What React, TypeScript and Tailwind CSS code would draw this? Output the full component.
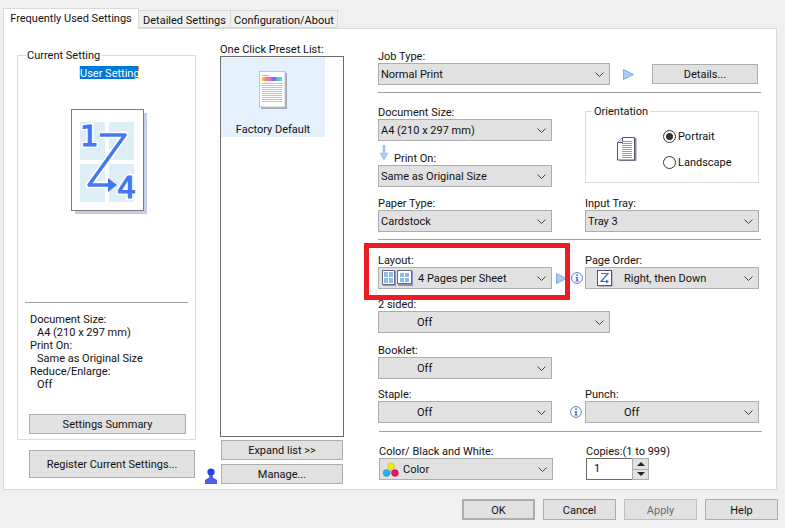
import type { ReactNode } from "react";

const Chevron = () => (
  <svg width="9" height="5" viewBox="0 0 9 5" fill="none" stroke="#404040" strokeWidth="1" className="shrink-0">
    <path d="M0.5 0.5L4.5 4.5L8.5 0.5" />
  </svg>
);

function Select({ className = "", indent = "pl-[2px]", icon, children }: { className?: string; indent?: string; icon?: ReactNode; children: ReactNode }) {
  return (
    <div className={`flex h-[22px] items-center border border-[#adadad] bg-[#e1e1e1] pr-[5px] ${indent} ${className}`}>
      {icon}
      <span className="flex-1 whitespace-nowrap pt-[2px]">{children}</span>
      <Chevron />
    </div>
  );
}

function Btn({ className = "", children }: { className?: string; children: ReactNode }) {
  return (
    <div className={`flex items-center justify-center border border-[#adadad] bg-[#e1e1e1] pt-[2px] whitespace-nowrap ${className}`}>
      {children}
    </div>
  );
}

const Label = ({ className = "", children }: { className?: string; children: ReactNode }) => (
  <div className={`h-[14px] leading-[16px] whitespace-nowrap ${className}`}>{children}</div>
);

const Divider = ({ className = "" }: { className?: string }) => <div className={`h-px bg-[#a0a0a0] ${className}`} />;

const BlueArrow = () => (
  <svg width="11" height="11" viewBox="0 0 11 11" className="shrink-0">
    <path d="M0.5 0.5L10.5 5.5L0.5 10.5Z" fill="#a9ccf0" stroke="#7fb0e4" />
  </svg>
);

const Info = () => (
  <svg width="12" height="12" viewBox="0 0 12 12" className="shrink-0">
    <circle cx="6" cy="6" r="5.4" fill="#fff" stroke="#5b7fd6" />
    <rect x="5.2" y="2.4" width="1.6" height="1.5" fill="#3f66c8" />
    <path d="M4.6 5H6.8V8.8H7.8V9.6H4.4V8.8H5.3V5.8H4.6Z" fill="#3f66c8" />
  </svg>
);

const digit = "DejaVu Sans, sans-serif";

const PreviewPage = () => (
  <svg width="76" height="105" viewBox="0 0 76 105" className="ml-[53px] mt-[30px] block">
    <rect x="4" y="4" width="72" height="101" fill="#c3cde8" />
    <rect x="0.5" y="0.5" width="72" height="101" fill="#fff" stroke="#7d7d7d" />
    <rect x="9" y="13" width="25" height="38" fill="#deeef7" />
    <rect x="38" y="13" width="25" height="38" fill="#deeef7" />
    <rect x="9" y="55" width="25" height="38" fill="#deeef7" />
    <rect x="38" y="55" width="25" height="38" fill="#deeef7" />
    <g fill="none" strokeLinejoin="round">
      <path d="M29 26H54L18 76H44" stroke="#fff" strokeWidth="7" />
      <path d="M29 26H54L18 76H44" stroke="#4477f5" strokeWidth="3.5" />
    </g>
    <path d="M37 69L46 76L37 83Z" fill="#4477f5" />
    <text x="9" y="37" fontSize="29" fill="#fff" stroke="#fff" strokeWidth="4" fontFamily={digit}>1</text>
    <text x="9" y="37" fontSize="29" fill="#4477f5" stroke="#4477f5" strokeWidth="1.2" fontFamily={digit}>1</text>
    <text x="46" y="89" fontSize="30" fill="#fff" stroke="#fff" strokeWidth="4" fontFamily={digit}>4</text>
    <text x="46" y="89" fontSize="30" fill="#4477f5" stroke="#4477f5" strokeWidth="1.2" fontFamily={digit}>4</text>
  </svg>
);

const PresetDoc = () => (
  <svg width="28" height="38" viewBox="0 0 28 38" className="block">
    <defs>
      <linearGradient id="rainbow">
        <stop offset="0" stopColor="#ffd84a" />
        <stop offset="0.2" stopColor="#ff7a6a" />
        <stop offset="0.4" stopColor="#f060e0" />
        <stop offset="0.6" stopColor="#5a6cf0" />
        <stop offset="0.8" stopColor="#40d0e8" />
        <stop offset="1" stopColor="#60f080" />
      </linearGradient>
    </defs>
    <rect x="2" y="2" width="26" height="36" fill="#a9a9bc" />
    <rect x="0.5" y="0.5" width="25.5" height="35.5" fill="#fff" stroke="#c4c4c4" />
    <rect x="3" y="4" width="7" height="1" fill="#b6b6c6" />
    <rect x="3" y="6" width="20" height="4" fill="url(#rainbow)" />
    {[12, 14, 16, 18, 20, 22, 24, 26, 28, 30].map((y) => (
      <rect key={y} x="3" y={y} width="20" height="1" fill="#a9c8f2" />
    ))}
  </svg>
);

const Person = () => (
  <svg width="12" height="16" viewBox="0 0 12 16" className="mr-[4px] shrink-0">
    <circle cx="6" cy="4" r="3.6" fill="#2a3fe0" />
    <path d="M4.2 7H7.8V9.5L12 12V16H0V12L4.2 9.5Z" fill="#4a5ff0" />
  </svg>
);

const MiniGrid = ({ wide }: { wide?: boolean }) => (
  <svg width={wide ? 16 : 14} height="16" viewBox={wide ? "0 0 16 16" : "0 0 14 16"} className="shrink-0">
    <rect x="1" y="1" width={wide ? 15 : 13} height="15" fill="#8f93c0" />
    <rect x="0.5" y="0.5" width={wide ? 14 : 12} height={wide ? 13 : 14} fill="#fff" stroke="#6a6a80" />
    {(wide ? [3, 8] : [2, 7]).map((x) =>
      (wide ? [3, 8] : [2, 8]).map((y) => (
        <rect key={`${x}-${y}`} x={x} y={y} width="4" height={wide ? 4 : 5} fill="#8cbde8" />
      )),
    )}
  </svg>
);

const OrderIcon = () => (
  <svg width="16" height="17" viewBox="0 0 16 17" className="shrink-0">
    <rect x="1.5" y="1.5" width="14" height="15" fill="#8f93c0" />
    <rect x="0.5" y="0.5" width="14" height="15" fill="#fff" stroke="#55557a" />
    <path d="M4 3.5H11L4 11.5H10" fill="none" stroke="#3f66e0" strokeWidth="1.2" />
    <path d="M9 9.5L12 11.5L9 13.5Z" fill="#3f66e0" />
  </svg>
);

const PortraitDoc = () => (
  <svg width="20" height="25" viewBox="0 0 20 25" className="block">
    <path d="M6 1H18.5V24H2V5Z" fill="#8a8ab0" transform="translate(1 0)" />
    <path d="M5.5 0.5H17.5V23H0.5V5.5Z" fill="#fff" stroke="#555570" />
    <path d="M5.5 0.5V5.5H0.5" fill="#e8e8f0" stroke="#555570" />
    {[4, 6, 8, 10, 12, 14, 16, 18, 20].map((y) => (
      <rect key={y} x="5" y={y} width="10" height="1" fill="#7b9ae0" />
    ))}
  </svg>
);

const ColorDots = () => (
  <svg width="17" height="16" viewBox="0 0 17 16" className="mr-[4px] shrink-0">
    <path d="M4 9H13L14 13H3Z" fill="#b9b9b9" />
    <circle cx="9" cy="5" r="3.4" fill="#f5e614" stroke="#c9b800" strokeWidth="0.5" />
    <circle cx="4.5" cy="12" r="3.4" fill="#25b4ea" stroke="#1a8cc0" strokeWidth="0.5" />
    <circle cx="13" cy="12" r="3.4" fill="#e6195f" stroke="#b01048" strokeWidth="0.5" />
  </svg>
);

const Radio = ({ on }: { on?: boolean }) => (
  <div className="flex h-[13px] w-[13px] shrink-0 items-center justify-center rounded-full border border-[#333] bg-white">
    {on && <div className="h-[7px] w-[7px] rounded-full bg-[#333]" />}
  </div>
);

export default function App() {
  return (
    <div className="relative flex h-[528px] w-[785px] flex-col overflow-hidden bg-[#f0f0f0] pl-[3px] pt-[8px] font-['Roboto',sans-serif] text-[11px] leading-[14px] text-[#111]">
      {/* Tabs */}
      <div className="relative z-10 -mb-px flex h-[21px] items-end whitespace-nowrap">
        <div className="flex h-[21px] w-[136px] items-start justify-center border border-b-0 border-[#d9d9d9] bg-white pt-[3px]">Frequently Used Settings</div>
        <div className="mb-px flex h-[18px] w-[92px] items-center justify-center border border-l-0 border-[#d9d9d9] bg-[#f0f0f0] pt-[3px]">Detailed Settings</div>
        <div className="mb-px flex h-[18px] w-[107px] items-center justify-center border border-l-0 border-[#d9d9d9] bg-[#f0f0f0] pt-[3px]">Configuration/About</div>
      </div>

      {/* Panel */}
      <div className="flex h-[462px] w-[774px] border border-[#d9d9d9] bg-white pl-[13px]">
        {/* Current setting */}
        <div className="w-[178px] shrink-0 pt-[19px]">
          <fieldset className="h-[392px] border border-[#dcdcdc]">
            <legend className="ml-[8px] h-[14px] px-[1px] leading-[16px]">Current Setting</legend>
            <div className="ml-[61px] mt-[4px] h-[13px] w-[60px] border-l border-r border-l-[#f5d7a8] border-r-[#e8944a] bg-[#0078d7] leading-[15px] whitespace-nowrap text-white">User Setting</div>
            <PreviewPage />
            <Divider className="mx-[7px] mt-[88px] w-[163px]" />
            <div className="ml-[12px] mt-[10px] leading-[13px]">
              <div>Document Size:</div>
              <div className="pl-[7px]">A4 (210 x 297 mm)</div>
              <div>Print On:</div>
              <div className="pl-[7px]">Same as Original Size</div>
              <div>Reduce/Enlarge:</div>
              <div className="pl-[7px]">Off</div>
            </div>
            <Btn className="ml-[11px] mt-[23px] h-[20px] w-[157px]">Settings Summary</Btn>
          </fieldset>
          <Btn className="ml-[12px] mt-[10px] h-[28px] w-[166px]">Register Current Settings...</Btn>
        </div>

        {/* Preset list */}
        <div className="ml-[10px] w-[139px] shrink-0 pt-[13px]">
          <Label className="pl-[15px]">One Click Preset List:</Label>
          <div className="ml-[15px] h-[381px] w-[124px] border border-[#6b6b6b]">
            <div className="flex h-[80px] w-[104px] flex-col items-center bg-[#e5f2fd] pt-[14px]">
              <PresetDoc />
              <div className="mt-[14px]">Factory Default</div>
            </div>
          </div>
          <Btn className="ml-[16px] mt-[3px] h-[20px] w-[122px]">Expand list &gt;&gt;</Btn>
          <div className="mt-[4px] flex items-end">
            <Person />
            <Btn className="h-[20px] w-[122px]">Manage...</Btn>
          </div>
        </div>

        {/* Print options */}
        <div className="ml-[34px] w-[385px] shrink-0 pt-[20px]">
          <Label>Job Type:</Label>
          <div className="flex items-center">
            <Select className="w-[232px]">Normal Print</Select>
            <div className="ml-[13px]"><BlueArrow /></div>
            <Btn className="ml-[18px] h-[20px] w-[106px]">Details...</Btn>
          </div>
          <Divider className="mt-[7px] w-[383px]" />

          <div className="mt-[11px] flex gap-[33px]">
            <div className="w-[174px] pt-[1px]">
              <Label>Document Size:</Label>
              <Select>A4 (210 x 297 mm)</Select>
              <div className="flex h-[24px] items-end pl-[2px]">
                <svg width="8" height="16" viewBox="0 0 8 16" className="mb-[4px] shrink-0">
                  <path d="M3 0H5V8H8L4 15L0 8H3Z" fill="#a9ccf0" stroke="#7fb0e4" strokeWidth="0.5" />
                </svg>
                <span className="ml-[6px] h-[14px] leading-[16px]">Print On:</span>
              </div>
              <Select>Same as Original Size</Select>
            </div>
            <fieldset className="h-[79px] w-[174px] border border-[#dcdcdc]">
              <legend className="ml-[6px] h-[14px] px-[2px] leading-[16px]">Orientation</legend>
              <div className="flex">
                <div className="ml-[31px] mt-[19px]"><PortraitDoc /></div>
                <div className="ml-[26px] mt-[12px] flex flex-col gap-[13px]">
                  <div className="flex h-[13px] items-center"><Radio on /><span className="ml-[2px] pt-[1px]">Portrait</span></div>
                  <div className="flex h-[13px] items-center"><Radio /><span className="ml-[2px] pt-[1px]">Landscape</span></div>
                </div>
              </div>
            </fieldset>
          </div>

          <div className="mt-[9px] flex gap-[33px]">
            <div className="w-[174px]">
              <Label>Paper Type:</Label>
              <Select>Cardstock</Select>
            </div>
            <div className="w-[174px]">
              <Label>Input Tray:</Label>
              <Select>Tray 3</Select>
            </div>
          </div>
          <Divider className="mt-[7px] w-[383px]" />

          <div className="mt-[13px] flex">
            <div className="w-[174px]">
              <Label>Layout:</Label>
              <Select icon={<div className="mr-[5px] flex gap-px pl-[1px]"><MiniGrid /><MiniGrid wide /></div>}>4 Pages per Sheet</Select>
            </div>
            <div className="flex w-[33px] items-end pb-[5px] pl-[4px]">
              <BlueArrow />
              <div className="ml-[4px]"><Info /></div>
            </div>
            <div className="w-[174px]">
              <Label>Page Order:</Label>
              <Select indent="pl-[11px]" icon={<div className="mr-[11px]"><OrderIcon /></div>}>Right, then Down</Select>
            </div>
          </div>

          <Label className="mt-[8px]">2 sided:</Label>
          <Select className="w-[232px]" indent="pl-[38px]">Off</Select>

          <Label className="mt-[10px]">Booklet:</Label>
          <Select className="w-[174px]" indent="pl-[38px]">Off</Select>

          <div className="mt-[8px] flex">
            <div className="w-[174px]">
              <Label>Staple:</Label>
              <Select indent="pl-[38px]">Off</Select>
            </div>
            <div className="flex w-[33px] items-end justify-end pb-[5px] pr-[3px]"><Info /></div>
            <div className="w-[174px]">
              <Label>Punch:</Label>
              <Select indent="pl-[38px]">Off</Select>
            </div>
          </div>
          <Divider className="ml-px mt-[8px] w-[383px]" />

          <div className="ml-px mt-[12px] flex gap-[33px]">
            <div className="w-[174px]">
              <Label>Color/ Black and White:</Label>
              <Select icon={<ColorDots />}>Color</Select>
            </div>
            <div>
              <Label>Copies:(1 to 999)</Label>
              <div className="flex h-[22px] w-[63px]">
                <div className="flex w-[46px] items-center border border-r-0 border-[#6b6b6b] bg-white pl-[7px]">1</div>
                <div className="flex w-[17px] flex-col border border-[#adadad]">
                  <div className="flex flex-1 items-center justify-center border-b border-[#adadad] bg-[#e1e1e1]">
                    <div className="h-0 w-0 border-x-[4px] border-b-[4px] border-x-transparent border-b-[#222]" />
                  </div>
                  <div className="flex flex-1 items-center justify-center bg-[#e1e1e1]">
                    <div className="h-0 w-0 border-x-[4px] border-t-[4px] border-x-transparent border-t-[#222]" />
                  </div>
                </div>
              </div>
            </div>
          </div>
        </div>
      </div>

      {/* Dialog buttons */}
      <div className="mt-[9px] flex w-[775px] justify-end gap-[8px]">
        <Btn className="h-[21px] w-[73px] border-2 border-[#0078d7]">OK</Btn>
        <Btn className="h-[21px] w-[73px]">Cancel</Btn>
        <Btn className="h-[21px] w-[73px] border-[#bfbfbf] bg-[#cccccc] text-[#6d6d6d]">Apply</Btn>
        <Btn className="h-[21px] w-[73px]">Help</Btn>
      </div>

      {/* Red annotation over the Layout field */}
      <div className="pointer-events-none absolute left-[364px] top-[243px] h-[57px] w-[206px] border-[5px] border-[#ed1c24]" />
    </div>
  );
}
